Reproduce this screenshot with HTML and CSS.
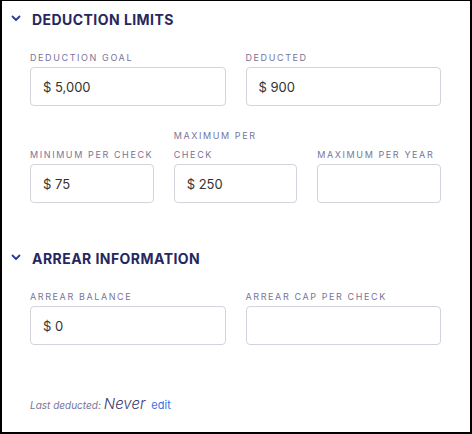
FILE: index.html
```html
<!DOCTYPE html>
<html lang="en">
<head>
  <meta charset="UTF-8">
  <title>Deduction Limits</title>
  <link rel="stylesheet" href="styles.css">
</head>
<body>
  <div class="panel">
    <div class="section">
      <div class="section-header">
        <svg class="chevron" width="10" height="7" viewBox="0 0 10 7"><path d="M1.5 1.5 L5 5 L8.5 1.5" fill="none" stroke="#2d3a9e" stroke-width="1.8" stroke-linecap="round" stroke-linejoin="round"/></svg>
        <h2>Deduction Limits</h2>
      </div>
      <div class="row cols-2">
        <div class="field">
          <label>Deduction Goal</label>
          <input type="text" value="$ 5,000">
        </div>
        <div class="field">
          <label>Deducted</label>
          <input type="text" value="$ 900">
        </div>
      </div>
      <div class="row cols-3">
        <div class="field">
          <label>Minimum per check</label>
          <input type="text" value="$ 75">
        </div>
        <div class="field">
          <label>Maximum per check</label>
          <input type="text" value="$ 250">
        </div>
        <div class="field">
          <label>Maximum per year</label>
          <input type="text" value="">
        </div>
      </div>
    </div>

    <div class="section">
      <div class="section-header">
        <svg class="chevron" width="10" height="7" viewBox="0 0 10 7"><path d="M1.5 1.5 L5 5 L8.5 1.5" fill="none" stroke="#2d3a9e" stroke-width="1.8" stroke-linecap="round" stroke-linejoin="round"/></svg>
        <h2>Arrear Information</h2>
      </div>
      <div class="row cols-2">
        <div class="field">
          <label>Arrear balance</label>
          <input type="text" value="$ 0">
        </div>
        <div class="field">
          <label>Arrear cap per check</label>
          <input type="text" value="">
        </div>
      </div>
    </div>

    <div class="footer">
      <span class="last-label">Last deducted:</span>
      <span class="last-value">Never</span>
      <a href="#" class="edit">edit</a>
    </div>
  </div>
</body>
</html>
```

FILE: styles.css
```css
body {
  margin: 0;
  font-family: Inter, "Noto Sans", sans-serif;
  background: #fff;
}
.panel {
  width: 472px;
  height: 434px;
  box-sizing: border-box;
  border-style: solid;
  border-color: #000;
  border-width: 1px 2px 2px 2px;
  padding: 8px 29px 0 28px;
  background: #fff;
}
.section-header {
  display: flex;
  align-items: center;
  height: 20px;
  margin-left: -19px;
  margin-bottom: 19px;
}
.chevron {
  margin-right: 11px;
  margin-top: -1px;
}
.section-header h2 {
  margin: 0;
  font-size: 14px;
  font-weight: 700;
  text-transform: uppercase;
  letter-spacing: 0.45px;
  color: #27275e;
}
.row {
  display: grid;
  gap: 20px;
  align-items: end;
  margin-bottom: 20px;
}
.cols-2 {
  grid-template-columns: 1fr 1fr;
}
.cols-3 {
  grid-template-columns: 1fr 1fr 1fr;
}
.field {
  display: flex;
  flex-direction: column;
}
label {
  font-size: 9px;
  line-height: 19px;
  letter-spacing: 1.6px;
  text-transform: uppercase;
  color: #76759a;
}
input {
  height: 39px;
  box-sizing: border-box;
  width: 100%;
  padding: 0 12px;
  font-family: Inter, "Noto Sans", sans-serif;
  font-size: 13px;
  color: #333;
  border: 1px solid #d3d3dc;
  border-radius: 4px;
  background: #fff;
}
.section + .section {
  margin-top: 45px;
}
.footer {
  margin-top: 49px;
  display: flex;
  align-items: baseline;
}
.last-label {
  font-size: 10px;
  font-style: italic;
  color: #76759a;
}
.last-value {
  font-size: 15px;
  font-style: italic;
  font-weight: 300;
  color: #3a3a72;
  margin-left: 3px;
}
.edit {
  font-size: 11px;
  color: #3b6fe3;
  text-decoration: none;
  margin-left: 6px;
}
```
